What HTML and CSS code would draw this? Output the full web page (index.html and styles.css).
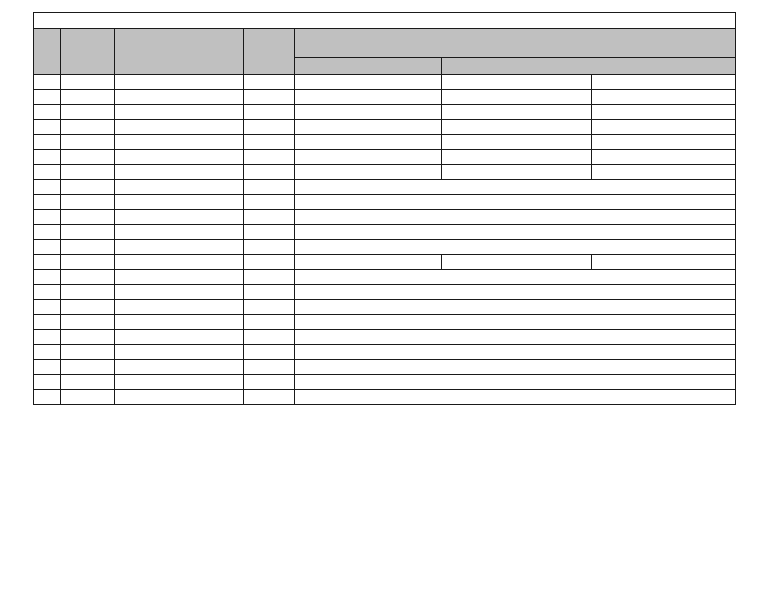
FILE: index.html
```html
<!DOCTYPE html>
<html>
<head>
<meta charset="utf-8">
<link rel="stylesheet" href="styles.css">
</head>
<body>
<div class="page">
<table class="sheet">
<colgroup>
<col class="c1"><col class="c2"><col class="c3"><col class="c4"><col class="c5"><col class="c6"><col class="c7">
</colgroup>
<tr class="title"><td colspan="7"></td></tr>
<tr class="h1"><td rowspan="2" class="hd"></td><td rowspan="2" class="hd"></td><td rowspan="2" class="hd"></td><td rowspan="2" class="hd"></td><td colspan="3" class="hd"></td></tr>
<tr class="h2"><td class="hd"></td><td colspan="2" class="hd"></td></tr>
<tr><td></td><td></td><td></td><td></td><td></td><td></td><td></td></tr>
<tr><td></td><td></td><td></td><td></td><td></td><td></td><td></td></tr>
<tr><td></td><td></td><td></td><td></td><td></td><td></td><td></td></tr>
<tr><td></td><td></td><td></td><td></td><td></td><td></td><td></td></tr>
<tr><td></td><td></td><td></td><td></td><td></td><td></td><td></td></tr>
<tr><td></td><td></td><td></td><td></td><td></td><td></td><td></td></tr>
<tr><td></td><td></td><td></td><td></td><td></td><td></td><td></td></tr>
<tr><td></td><td></td><td></td><td></td><td colspan="3"></td></tr>
<tr><td></td><td></td><td></td><td></td><td colspan="3"></td></tr>
<tr><td></td><td></td><td></td><td></td><td colspan="3"></td></tr>
<tr><td></td><td></td><td></td><td></td><td colspan="3"></td></tr>
<tr><td></td><td></td><td></td><td></td><td colspan="3"></td></tr>
<tr><td></td><td></td><td></td><td></td><td></td><td></td><td></td></tr>
<tr><td></td><td></td><td></td><td></td><td colspan="3"></td></tr>
<tr><td></td><td></td><td></td><td></td><td colspan="3"></td></tr>
<tr><td></td><td></td><td></td><td></td><td colspan="3"></td></tr>
<tr><td></td><td></td><td></td><td></td><td colspan="3"></td></tr>
<tr><td></td><td></td><td></td><td></td><td colspan="3"></td></tr>
<tr><td></td><td></td><td></td><td></td><td colspan="3"></td></tr>
<tr><td></td><td></td><td></td><td></td><td colspan="3"></td></tr>
<tr><td></td><td></td><td></td><td></td><td colspan="3"></td></tr>
<tr><td></td><td></td><td></td><td></td><td colspan="3"></td></tr>
</table>
</div>
</body>
</html>
```
FILE: styles.css
```css
html, body {
  margin: 0;
  padding: 0;
  background: #ffffff;
}
.page {
  padding: 12px 0 0 33px;
}
.sheet {
  border-collapse: collapse;
  table-layout: fixed;
  width: 703px;
  font-family: "Liberation Sans", Arial, sans-serif;
  font-size: 1px;
  line-height: 1px;
}
.sheet td {
  border: 1px solid #1a1a1a;
  padding: 0;
  height: 14px;
}
.c1 { width: 27px; }
.c2 { width: 54px; }
.c3 { width: 129px; }
.c4 { width: 51px; }
.c5 { width: 147px; }
.c6 { width: 150px; }
.c7 { width: 144px; }
.sheet .title td { height: 15px; }
.sheet .h1 td { height: 28px; }
.sheet .h2 td { height: 16px; }
.sheet td.hd { background: #c0c0c0; }
.sheet .h1 td.hd[rowspan] { height: auto; }
```
